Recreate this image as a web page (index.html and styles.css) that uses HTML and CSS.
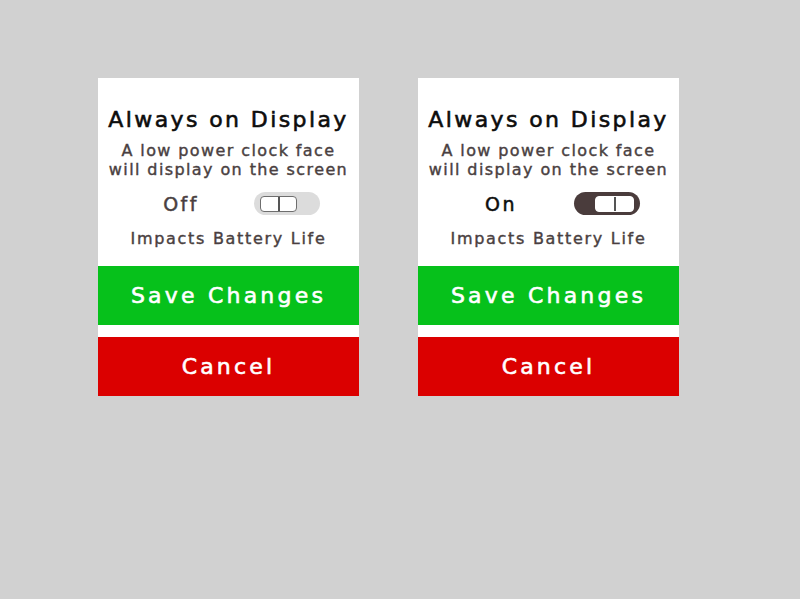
FILE: index.html
```html
<!doctype html>
<html lang="en">
<head>
	<meta charset="UTF-8">
	<title>Always on Display</title>
	<link rel="stylesheet" href="styles.css">
</head>
<body>
	<div class="screens">
		<div class="card">
			<div class="info">
				<h1 class="title">Always on Display</h1>
				<p class="desc">A low power clock face<br>will display on the screen</p>
				<div class="row">
					<span class="state">Off</span>
					<span class="toggle"><span class="knob"></span></span>
				</div>
				<p class="note">Impacts Battery Life</p>
			</div>
			<a class="btn save" href="#">Save Changes</a>
			<a class="btn cancel" href="#">Cancel</a>
		</div>
		<div class="card">
			<div class="info">
				<h1 class="title">Always on Display</h1>
				<p class="desc">A low power clock face<br>will display on the screen</p>
				<div class="row">
					<span class="state on">On</span>
					<span class="toggle checked"><span class="knob"></span></span>
				</div>
				<p class="note">Impacts Battery Life</p>
			</div>
			<a class="btn save" href="#">Save Changes</a>
			<a class="btn cancel" href="#">Cancel</a>
		</div>
	</div>
</body>
</html>
```
FILE: styles.css
```css
body {
	margin: 0;
	background-color: #d1d1d1;
	font: 400 16px "DejaVu Sans", sans-serif;
}

a {
	text-decoration: none;
}

.screens {
	display: flex;
	gap: 59px;
	padding: 78px 0 0 98px;
}

.card {
	display: flex;
	flex-direction: column;
	width: 261px;
	background-color: #fff;
}

.info {
	display: flex;
	flex-direction: column;
	align-items: center;
	height: 188px;
	padding-top: 27px;
	box-sizing: border-box;
	text-align: center;
}

.title {
	margin: 0;
	font-size: 22px;
	font-weight: 400;
	line-height: 30px;
	letter-spacing: 2.4px;
	color: #0d0d0d;
	-webkit-text-stroke: 0.6px #0d0d0d;
}

.desc {
	margin: 6px 0 0;
	font-size: 16px;
	line-height: 19px;
	letter-spacing: 1.4px;
	color: #4a3f41;
	-webkit-text-stroke: 0.4px #4a3f41;
}

.row {
	display: flex;
	align-items: center;
	gap: 29px;
	margin-top: 13px;
}

.state {
	width: 88px;
	font-size: 19px;
	letter-spacing: 2.4px;
	color: #4a3f41;
	-webkit-text-stroke: 0.5px #4a3f41;
}

.state.on {
	color: #0d0d0d;
	-webkit-text-stroke-color: #0d0d0d;
}

.toggle {
	display: flex;
	align-items: center;
	width: 66px;
	height: 23px;
	padding: 0 6px;
	box-sizing: border-box;
	border-radius: 12px;
	background-color: #dcdcdc;
}

.toggle.checked {
	justify-content: flex-end;
	background-color: #4a3c3c;
}

.knob {
	position: relative;
	width: 37px;
	height: 16px;
	box-sizing: border-box;
	border: 1px solid #6e6e6e;
	border-radius: 4px;
	background-color: #fff;
}

.toggle.checked .knob {
	width: 39px;
	border-color: #fff;
}

.knob::after {
	position: absolute;
	left: 50%;
	top: 0;
	bottom: 0;
	content: "";
	width: 2px;
	margin-left: -1px;
	background-color: #555;
}

.note {
	margin: 14px 0 0;
	font-size: 16px;
	letter-spacing: 1.7px;
	color: #4a3f41;
	-webkit-text-stroke: 0.4px #4a3f41;
}

.btn {
	display: block;
	height: 59px;
	line-height: 59px;
	text-align: center;
	font-size: 22px;
	letter-spacing: 3.2px;
	color: #fff;
	-webkit-text-stroke: 0.6px #fff;
}

.save {
	background-color: #06c11b;
}

.cancel {
	margin-top: 12px;
	background-color: #db0000;
}
```
